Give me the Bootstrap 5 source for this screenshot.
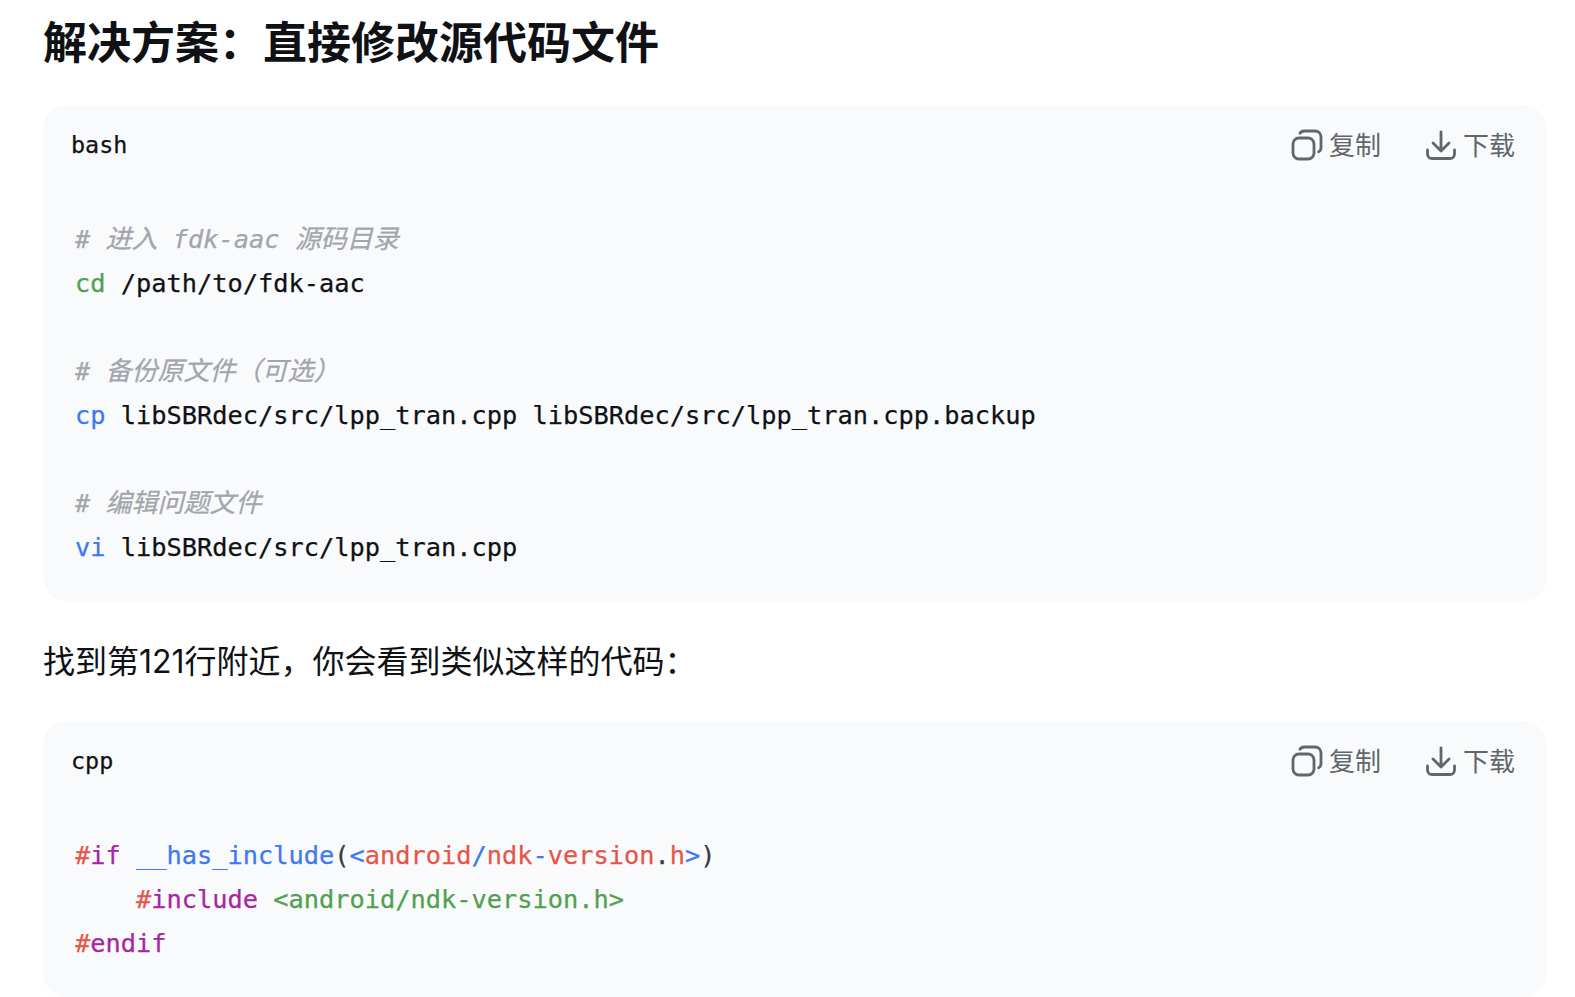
<!DOCTYPE html>
<html lang="zh">
<head>
<meta charset="utf-8">
<title>解决方案</title>
<link href="https://cdn.jsdelivr.net/npm/bootstrap@5.3.0/dist/css/bootstrap.min.css" rel="stylesheet">
<style>
html,body{height:997px;overflow:hidden;background:#fff}
body{font-family:"Inter","Noto Sans CJK SC",sans-serif;color:#0f1115;padding:0 28px 0 43px}
.page-head{font-size:44px;font-weight:700;line-height:62px;margin:9px 0 34px;font-family:"Noto Sans CJK SC",sans-serif}
.code-box{background:#f9fafb;border-radius:24px;padding:20px 32px 32px 32px}
.code-top{height:40px;margin-bottom:52px}
.lang-name{font-family:"DejaVu Sans Mono","Noto Sans CJK SC",monospace;font-size:23.4px;margin:2px 0 0 -4px;color:#0f1115;-webkit-text-stroke:.25px #0f1115}
.tool-group{gap:44px}
.tool-btn{font-size:26px;color:#61666b;line-height:40px;font-family:"Noto Sans CJK SC",sans-serif;gap:6px}
.tool-btn svg{width:32px;height:32px;flex:none}
.tool-label{margin-top:-3px}
.code-text{font-family:"DejaVu Sans Mono","Noto Sans CJK SC",monospace;font-size:25.33px;line-height:44px;margin:0;white-space:pre;overflow:hidden;color:#0f1115;-webkit-text-stroke:.25px currentColor}
.para-text{font-size:32px;line-height:48px;margin:37px 0 35px;color:#0f1115}
.c-gray{color:#a2a5ab;font-style:italic}
.cjk-note{font-size:26px}
.c-green{color:#50a14f}
.c-blue{color:#4078f2}
.c-red{color:#e45649}
.c-purple{color:#a626a4}
.c-dark{color:#383a42}
</style>
</head>
<body>
<h1 class="page-head">解决方案：直接修改源代码文件</h1>

<div class="code-box">
  <div class="code-top d-flex align-items-center justify-content-between">
    <span class="lang-name">bash</span>
    <div class="tool-group d-flex align-items-center">
      <span class="tool-btn d-flex align-items-center">
        <svg viewBox="0 0 32 32" fill="none" stroke="#61666b" stroke-width="2.8" stroke-linecap="round"><rect x="2" y="9" width="21" height="21" rx="6"/><path d="M9 4.2C10 2.6 11.5 2 13.500 2H24c3.500 0 6 2.500 6 6v10.500c0 2-.8 3.500-2.400 4.400"/></svg><span class="tool-label">复制</span></span>
      <span class="tool-btn d-flex align-items-center">
        <svg viewBox="0 0 32 32" fill="none" stroke="#61666b" stroke-width="2.8" stroke-linecap="round" stroke-linejoin="round"><path d="M16 3v18M8 14l8 8 8-8"/><path d="M2.500 21v4c0 2.800 2 4.500 4.500 4.500h18c2.500 0 4.500-1.700 4.500-4.500v-4"/></svg><span class="tool-label">下载</span></span>
    </div>
  </div>
<pre class="code-text"><span class="c-gray"># <span class="cjk-note">进入</span> fdk-aac <span class="cjk-note">源码目录</span></span>
<span class="c-green">cd</span> /path/to/fdk-aac

<span class="c-gray"># <span class="cjk-note">备份原文件（可选）</span></span>
<span class="c-blue">cp</span> libSBRdec/src/lpp_tran.cpp libSBRdec/src/lpp_tran.cpp.backup

<span class="c-gray"># <span class="cjk-note">编辑问题文件</span></span>
<span class="c-blue">vi</span> libSBRdec/src/lpp_tran.cpp</pre>
</div>

<p class="para-text">找到第121行附近，你会看到类似这样的代码：</p>

<div class="code-box">
  <div class="code-top d-flex align-items-center justify-content-between">
    <span class="lang-name">cpp</span>
    <div class="tool-group d-flex align-items-center">
      <span class="tool-btn d-flex align-items-center">
        <svg viewBox="0 0 32 32" fill="none" stroke="#61666b" stroke-width="2.8" stroke-linecap="round"><rect x="2" y="9" width="21" height="21" rx="6"/><path d="M9 4.2C10 2.6 11.5 2 13.500 2H24c3.500 0 6 2.500 6 6v10.500c0 2-.8 3.500-2.400 4.400"/></svg><span class="tool-label">复制</span></span>
      <span class="tool-btn d-flex align-items-center">
        <svg viewBox="0 0 32 32" fill="none" stroke="#61666b" stroke-width="2.8" stroke-linecap="round" stroke-linejoin="round"><path d="M16 3v18M8 14l8 8 8-8"/><path d="M2.500 21v4c0 2.800 2 4.500 4.500 4.500h18c2.500 0 4.500-1.700 4.500-4.500v-4"/></svg><span class="tool-label">下载</span></span>
    </div>
  </div>
<pre class="code-text"><span class="c-red">#</span><span class="c-purple">if</span> <span class="c-blue">__has_include</span><span class="c-dark">(</span><span class="c-blue">&lt;</span><span class="c-red">android</span><span class="c-blue">/</span><span class="c-red">ndk</span><span class="c-blue">-</span><span class="c-red">version</span><span class="c-dark">.</span><span class="c-red">h</span><span class="c-blue">&gt;</span><span class="c-dark">)</span>
    <span class="c-red">#</span><span class="c-purple">include</span> <span class="c-green">&lt;android/ndk-version.h&gt;</span>
<span class="c-red">#</span><span class="c-purple">endif</span></pre>
</div>
</body>
</html>
